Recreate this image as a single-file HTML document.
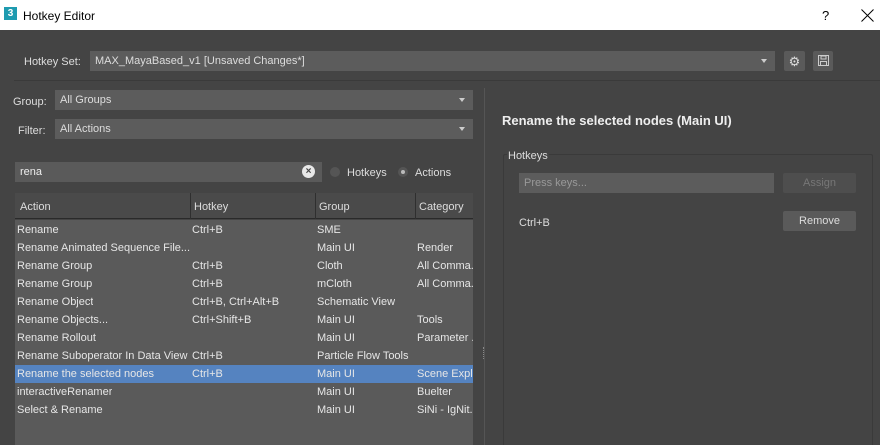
<!DOCTYPE html>
<html><head><style>
*{margin:0;padding:0;box-sizing:border-box}
html,body{width:880px;height:445px;overflow:hidden}
body{background:#444;font-family:"Liberation Sans",sans-serif;font-size:11px;color:#ddd;position:relative}
.a{position:absolute}
.combo{position:absolute;background:#5c5c5c;height:20px;line-height:21px;padding-left:5px;color:#ddd}
.combo:after{content:"";position:absolute;right:8px;top:8px;border-left:3px solid transparent;border-right:3px solid transparent;border-top:4px solid #ccc}
.btn{position:absolute;background:#5a5a5a;height:20px;line-height:21px;text-align:center;border-radius:2px}
.row{position:absolute;left:15px;width:458px;height:18px;line-height:19px;color:#e6e6e6;overflow:hidden}
.row span{position:absolute;white-space:nowrap;overflow:hidden}
</style></head><body>
<div class="a" style="left:0;top:0;width:880px;height:30px;background:#fff;color:#000;font-size:12px">
<div class="a" style="left:4px;top:7px;width:13px;height:13px;background:#1e9bb0;color:#fff;font-size:10px;font-weight:bold;line-height:13px;text-align:center">3</div>
<div class="a" style="left:23px;top:9px">Hotkey Editor</div>
<div class="a" style="left:822px;top:8px;font-size:13px">?</div>
<svg class="a" style="left:861px;top:9px" width="13" height="13"><path d="M0.5 0.5L12.5 12.5M12.5 0.5L0.5 12.5" stroke="#000" stroke-width="1"/></svg>
</div>
<div class="a" style="left:24px;top:56px">Hotkey Set:</div>
<div class="combo" style="left:90px;top:51px;width:685px">MAX_MayaBased_v1 [Unsaved Changes*]</div>
<div class="btn" style="left:784px;top:51px;width:21px;font-size:13px">⚙</div>
<div class="btn" style="left:813px;top:51px;width:20px"><svg width="11" height="11" style="margin-top:4px"><rect x="0.5" y="0.5" width="10" height="10" fill="none" stroke="#ccc"/><rect x="3" y="1" width="5" height="3" fill="none" stroke="#ccc"/><rect x="2.5" y="6.5" width="6" height="4" fill="none" stroke="#ccc"/></svg></div>
<div class="a" style="left:14px;top:80px;width:866px;height:1px;background:#3a3a3a"></div>
<div class="a" style="left:484px;top:88px;width:1px;height:357px;background:#555"></div>
<div class="a" style="left:13px;top:96px">Group:</div>
<div class="combo" style="left:55px;top:90px;width:418px">All Groups</div>
<div class="a" style="left:18px;top:125px">Filter:</div>
<div class="combo" style="left:55px;top:119px;width:418px">All Actions</div>
<div class="a" style="left:15px;top:162px;width:307px;height:20px;background:#5a5a5a;padding-left:5px;line-height:21px;color:#eee">rena
<div class="a" style="left:287px;top:3px;width:13px;height:13px;border-radius:50%;background:#e8e8e8;color:#444;font-size:10px;line-height:13px;text-align:center;font-weight:bold">×</div></div>
<div class="a" style="left:330px;top:167px;width:10px;height:10px;border-radius:50%;background:#555"></div>
<div class="a" style="left:347px;top:167px">Hotkeys</div>
<div class="a" style="left:398px;top:167px;width:10px;height:10px;border-radius:50%;background:#555"><div class="a" style="left:3px;top:3px;width:4px;height:4px;border-radius:50%;background:#bbb"></div></div>
<div class="a" style="left:415px;top:167px">Actions</div>
<div class="a" style="left:15px;top:193px;width:458px;height:26px;background:#4a4a4a;border-bottom:1px solid #2a2a2a"></div>
<div class="a" style="left:190px;top:193px;width:1px;height:26px;background:#2f2f2f"></div>
<div class="a" style="left:315px;top:193px;width:1px;height:26px;background:#2f2f2f"></div>
<div class="a" style="left:415px;top:193px;width:1px;height:26px;background:#2f2f2f"></div>
<div class="a" style="left:20px;top:201px">Action</div>
<div class="a" style="left:194px;top:201px">Hotkey</div>
<div class="a" style="left:319px;top:201px">Group</div>
<div class="a" style="left:419px;top:201px">Category</div>
<div class="a" style="left:15px;top:220px;width:458px;height:225px;background:#5a5a5a"></div>
<div class="row" style="top:221px"><span style="left:2px">Rename</span><span style="left:177px">Ctrl+B</span><span style="left:302px">SME</span></div>
<div class="row" style="top:239px"><span style="left:2px">Rename Animated Sequence File...</span><span style="left:302px">Main UI</span><span style="left:402px">Render</span></div>
<div class="row" style="top:257px"><span style="left:2px">Rename Group</span><span style="left:177px">Ctrl+B</span><span style="left:302px">Cloth</span><span style="left:402px">All Comma..</span></div>
<div class="row" style="top:275px"><span style="left:2px">Rename Group</span><span style="left:177px">Ctrl+B</span><span style="left:302px">mCloth</span><span style="left:402px">All Comma..</span></div>
<div class="row" style="top:293px"><span style="left:2px">Rename Object</span><span style="left:177px">Ctrl+B, Ctrl+Alt+B</span><span style="left:302px">Schematic View</span></div>
<div class="row" style="top:311px"><span style="left:2px">Rename Objects...</span><span style="left:177px">Ctrl+Shift+B</span><span style="left:302px">Main UI</span><span style="left:402px">Tools</span></div>
<div class="row" style="top:329px"><span style="left:2px">Rename Rollout</span><span style="left:302px">Main UI</span><span style="left:402px">Parameter .</span></div>
<div class="row" style="top:347px"><span style="left:2px;width:172px">Rename Suboperator In Data View</span><span style="left:177px">Ctrl+B</span><span style="left:302px">Particle Flow Tools</span></div>
<div class="row" style="top:365px;background:#5583c0"><span style="left:2px">Rename the selected nodes</span><span style="left:177px">Ctrl+B</span><span style="left:302px">Main UI</span><span style="left:402px">Scene Expl.</span></div>
<div class="row" style="top:383px"><span style="left:2px">interactiveRenamer</span><span style="left:302px">Main UI</span><span style="left:402px">Buelter</span></div>
<div class="row" style="top:401px"><span style="left:2px">Select &amp; Rename</span><span style="left:302px">Main UI</span><span style="left:402px">SiNi - IgNit..</span></div>
<div class="a" style="left:483px;top:347px;width:2px;height:12px;border-left:1px dotted #888"></div>
<div class="a" style="left:502px;top:113px;font-size:13px;font-weight:bold;color:#eee">Rename the selected nodes (Main UI)</div>
<div class="a" style="left:503px;top:154px;width:370px;height:300px;border:1px solid #3a3a3a;border-radius:2px"></div>
<div class="a" style="left:507px;top:150px;background:#444;padding:0 1px">Hotkeys</div>
<div class="a" style="left:519px;top:173px;width:255px;height:20px;background:#5c5c5c;padding-left:5px;line-height:21px;color:#999">Press keys...</div>
<div class="btn" style="left:783px;top:173px;width:73px;color:#777;background:#4e4e4e">Assign</div>
<div class="a" style="left:519px;top:217px">Ctrl+B</div>
<div class="btn" style="left:783px;top:211px;width:73px;color:#ddd">Remove</div>
</body></html>
